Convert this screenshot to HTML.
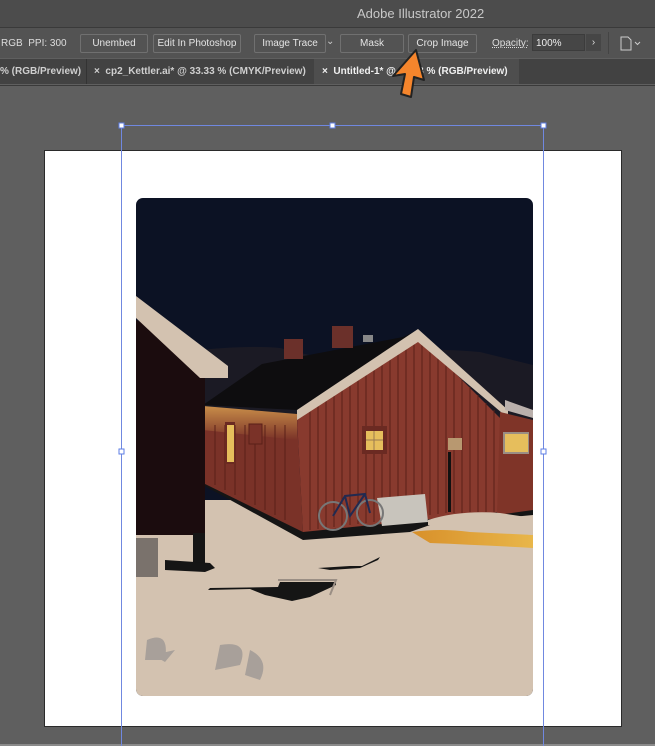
<!DOCTYPE html><html><head><style>
body{margin:0;width:655px;height:746px;overflow:hidden;background:#5f5f5f;font-family:"Liberation Sans",sans-serif;position:relative}
.t{position:absolute;left:0;top:0;width:655px;height:27px;background:#4c4c4c;border-bottom:1px solid #3a3a3a}
.t span{position:absolute;left:357px;top:6px;color:#c8c8c8;font-size:13px}
.c{position:absolute;left:0;top:28px;width:655px;height:30px;background:#535353}
.tabs{position:absolute;left:0;top:59px;width:655px;height:25px;background:#424242}
.tab{position:absolute;top:59px;height:25px;line-height:25px;font-size:10px;color:#cfcfcf;font-weight:bold}
.b{position:absolute;top:34px;height:17px;border:1px solid #707070;border-radius:2px;color:#e4e4e4;font-size:10px;line-height:17px;text-align:center}
</style></head><body>
<div class="t"><span>Adobe Illustrator 2022</span></div>
<div class="c"></div>
<span style="position:absolute;left:1px;top:38px;color:#ddd;font-size:10px">RGB&nbsp;&nbsp;PPI: 300</span>
<div class="b" style="left:80px;width:66px">Unembed</div>
<div class="b" style="left:153px;width:86px">Edit In Photoshop</div>
<div class="b" style="left:254px;width:70px">Image Trace</div>
<span style="position:absolute;left:326px;top:36px;color:#ccc;font-size:10px">⌄</span>
<div class="b" style="left:340px;width:62px">Mask</div>
<div class="b" style="left:408px;width:67px">Crop Image</div>
<span style="position:absolute;left:492px;top:38px;color:#ddd;font-size:10px;text-decoration:underline dotted">Opacity:</span>
<div style="position:absolute;left:532px;top:34px;width:53px;height:17px;background:#464646;border:1px solid #3c3c3c;color:#eee;font-size:10px;line-height:17px;padding-left:3px;box-sizing:border-box">100%</div>
<div style="position:absolute;left:586px;top:34px;width:15px;height:17px;background:#464646;color:#ddd;font-size:10px;line-height:17px;text-align:center">›</div>
<div style="position:absolute;left:608px;top:32px;width:1px;height:22px;background:#444"></div>
<svg style="position:absolute;left:618px;top:34px" width="26" height="18"><path d="M3 3h7l3 3v10H3z" fill="none" stroke="#ccc"/><path d="M17 8l2.5 2.5L22 8" fill="none" stroke="#ccc"/></svg>
<div class="tabs"></div>
<div style="position:absolute;left:86px;top:59px;width:1px;height:25px;background:#333"></div>
<div style="position:absolute;left:314px;top:59px;width:205px;height:25px;background:#4e4e4e"></div>
<div class="tab" style="left:0">% (RGB/Preview)</div>
<div class="tab" style="left:94px">×&nbsp;&nbsp;cp2_Kettler.ai* @ 33.33 % (CMYK/Preview)</div>
<div class="tab" style="left:322px;color:#f0f0f0">×&nbsp;&nbsp;Untitled-1* @ 33.33 % (RGB/Preview)</div>
<div style="position:absolute;left:0;top:85px;width:655px;height:1px;background:#3a3a3a"></div>
<div style="position:absolute;left:0;top:744px;width:655px;height:2px;background:#8a8a8a"></div>
<div style="position:absolute;left:45px;top:151px;width:576px;height:575px;background:#fff;box-shadow:0 0 0 1px #2a2a2a"></div>
<svg style="position:absolute;left:0;top:0" width="655" height="746">
<defs><clipPath id="cl"><rect x="136" y="198" width="397" height="498" rx="7"/></clipPath>
<linearGradient id="g" x1="0" y1="0" x2="1" y2="0"><stop offset="0" stop-color="#d8902a"/><stop offset="1" stop-color="#e8b64a"/></linearGradient>
<linearGradient id="gl" x1="0" y1="0" x2="0" y2="1"><stop offset="0" stop-color="#c98e4a"/><stop offset="1" stop-color="#7a3228"/></linearGradient></defs>
<g clip-path="url(#cl)">
<rect x="136" y="198" width="397" height="498" fill="#0c1224"/>
<path d="M200 350 Q250 345 280 348 L330 360 Q400 345 480 352 L533 365 V440 H200z" fill="#1b1a24"/>
<rect x="136" y="500" width="397" height="196" fill="#d3c2b0"/>
<path d="M203 485 L303 540 L410 532 L430 525 L533 515 V505 L203 470z" fill="#151515"/>
<path d="M203 410 L297 418 L303 532 L203 483z" fill="#7a3228"/>
<path d="M203 406 L297 414 L297 440 L203 430z" fill="url(#gl)"/>
<path d="M297 418 L418 336 L500 418 L500 512 L303 532z" fill="#883a2e"/>
<g stroke="#5a2018" stroke-width="1">
<path d="M310 410V530M318 404V529M326 399V528M334 393V527M342 388V526M350 383V525M358 377V524M366 372V523M374 366V522M382 361V521M390 355V520M398 350V519M406 344V518M414 339V517M422 339V516M430 347V515M438 355V514M446 363V513M454 371V513M462 379V513M470 387V512M478 395V512M486 403V512M494 410V512"/>
<path d="M215 425V485M225 425V490M235 425V495M245 425V500M255 425V505M265 425V510M275 425V515M285 425V520"/>
</g>
<path d="M203 405 L262 364 L403 337 L418 330 L297 410z" fill="#0e0d0f"/>
<path d="M297 410 L418 329 L508 410 L508 418 L418 342 L297 420z" fill="#d3c2b0"/>
<path d="M500 412 L533 420 V510 L497 515z" fill="#7f3428"/>
<path d="M505 400 L533 410 V418 L505 410z" fill="#bab0ac"/>
<rect x="284" y="339" width="19" height="20" fill="#6b302a"/><rect x="332" y="326" width="21" height="22" fill="#6b302a"/><rect x="363" y="335" width="10" height="7" fill="#888"/>
<rect x="362" y="426" width="25" height="28" fill="#6b2a22"/><rect x="366" y="431" width="17" height="19" fill="#e6be5c"/><path d="M374 431v19M366 440h17" stroke="#9a7a50"/>
<rect x="503" y="432" width="26" height="22" fill="#9a8e84"/><rect x="505" y="434" width="23" height="18" fill="#e6be5c"/>
<rect x="225" y="422" width="10" height="42" fill="#6b2a22"/><rect x="227" y="425" width="7" height="37" fill="#e6be5c"/>
<rect x="249" y="424" width="13" height="20" fill="#7a3228" stroke="#5a2018"/>
<rect x="448" y="438" width="14" height="12" fill="#b89870"/>
<rect x="448" y="452" width="3" height="60" fill="#111"/>
<path d="M377 498 L425 494 L428 522 L382 526z" fill="#c8c4bc"/>
<circle cx="333" cy="516" r="14" fill="none" stroke="#777" stroke-width="2"/><circle cx="370" cy="513" r="13" fill="none" stroke="#777" stroke-width="2"/>
<path d="M333 516 L345 496 L365 494 L370 513 M345 496 L350 516 L365 494" fill="none" stroke="#222a50" stroke-width="2"/>
<path d="M412 532 Q440 528 470 532 L533 535 V548 Q480 545 430 543z" fill="url(#g)"/>
<path d="M428 520 Q460 510 500 513 L533 518 V535 Q480 530 428 525z" fill="#d3c2b0"/>
<path d="M136 320 L205 350 V535 L136 535z" fill="#1b0c0e"/>
<path d="M136 296 L228 366 V378 L200 378 L136 318z" fill="#d3c2b0"/>
<rect x="193" y="533" width="12" height="35" fill="#151515"/>
<path d="M165 560 L210 563 L215 568 L205 572 L165 570z" fill="#151515"/>
<path d="M136 538 H158 V577 H136z" fill="#7a726c"/>
<path d="M208 590 L250 589 L265 595 L292 601 L310 597 L336 585 L336 582 L280 582 L278 587 L210 588z" fill="#151515"/>
<path d="M278 580 H336 L330 595" fill="none" stroke="#9a8e84" stroke-width="2"/>
<path d="M318 568 L350 566 L362 566 L380 557 L378 560 L360 568 L330 570z" fill="#151515"/>
<path d="M147 640 Q170 630 165 660 L145 660z M220 645 Q250 640 240 665 L215 670z M250 650 Q270 660 260 680 L245 675z M153 655 L175 650 L165 662z" fill="#a8a09a"/>
</g>
<rect x="121.5" y="125.5" width="422" height="630" fill="none" stroke="#7088e0"/>
<g fill="#fff" stroke="#5c7ee6"><rect x="119" y="123" width="5" height="5"/><rect x="330" y="123" width="5" height="5"/><rect x="541" y="123" width="5" height="5"/><rect x="119" y="449" width="5" height="5"/><rect x="541" y="449" width="5" height="5"/></g>
<path d="M416 50 L424 80 L414 77 L411 97 L401 94 L405 74 L393 76z" fill="#f5852c" stroke="#222" stroke-width="2" stroke-linejoin="round"/>
</svg>
</body></html>
